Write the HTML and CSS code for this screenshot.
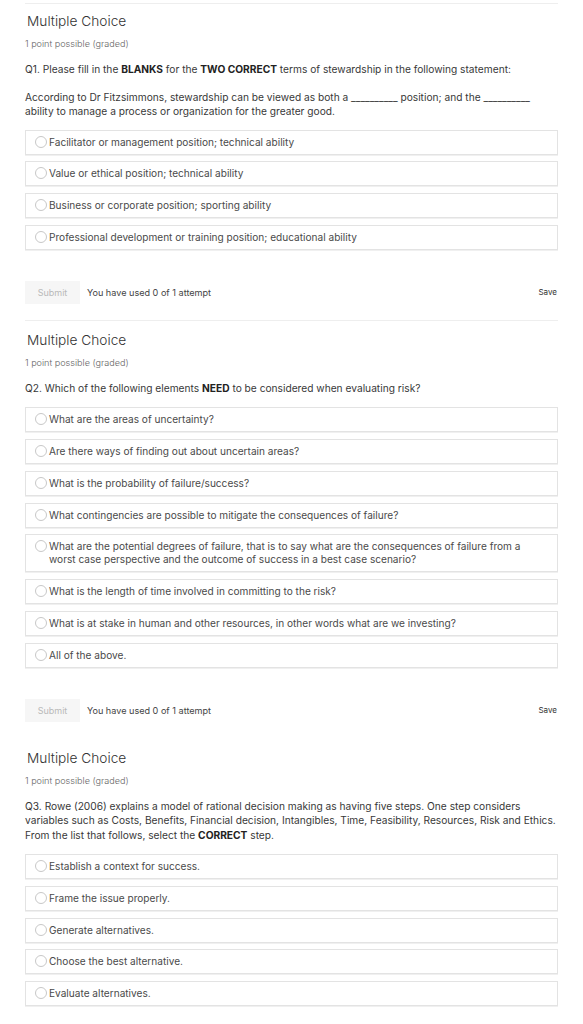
FILE: index.html
```html
<!DOCTYPE html>
<html lang="en">
<head>
<meta charset="utf-8">
<title>Multiple Choice</title>
<link rel="stylesheet" href="styles.css">
</head>
<body>
<main class="course">
  <section class="problem">
    <h2 class="problem-title">Multiple Choice</h2>
    <div class="points">1 point possible (graded)</div>
    <p class="question">Q1. Please fill in the <strong>BLANKS</strong> for the <strong>TWO CORRECT</strong> terms of stewardship in the following statement:</p>
    <p class="statement">According to Dr Fitzsimmons, stewardship can be viewed as both a __________ position; and the __________ ability to manage a process or organization for the greater good.</p>
    <div class="choices">
      <label class="choice"><span class="radio"></span><span class="choice-text">Facilitator or management position; technical ability</span></label>
      <label class="choice"><span class="radio"></span><span class="choice-text">Value or ethical position; technical ability</span></label>
      <label class="choice"><span class="radio"></span><span class="choice-text">Business or corporate position; sporting ability</span></label>
      <label class="choice"><span class="radio"></span><span class="choice-text">Professional development or training position; educational ability</span></label>
    </div>
    <div class="actions">
      <span class="submit">Submit</span>
      <span class="attempts">You have used 0 of 1 attempt</span>
      <span class="save">Save</span>
    </div>
  </section>

  <section class="problem">
    <h2 class="problem-title">Multiple Choice</h2>
    <div class="points">1 point possible (graded)</div>
    <p class="question">Q2. Which of the following elements <strong>NEED</strong> to be considered when evaluating risk?</p>
    <div class="choices">
      <label class="choice"><span class="radio"></span><span class="choice-text">What are the areas of uncertainty?</span></label>
      <label class="choice"><span class="radio"></span><span class="choice-text">Are there ways of finding out about uncertain areas?</span></label>
      <label class="choice"><span class="radio"></span><span class="choice-text">What is the probability of failure/success?</span></label>
      <label class="choice"><span class="radio"></span><span class="choice-text">What contingencies are possible to mitigate the consequences of failure?</span></label>
      <label class="choice"><span class="radio"></span><span class="choice-text">What are the potential degrees of failure, that is to say what are the consequences of failure from a worst case perspective and the outcome of success in a best case scenario?</span></label>
      <label class="choice"><span class="radio"></span><span class="choice-text">What is the length of time involved in committing to the risk?</span></label>
      <label class="choice"><span class="radio"></span><span class="choice-text">What is at stake in human and other resources, in other words what are we investing?</span></label>
      <label class="choice"><span class="radio"></span><span class="choice-text">All of the above.</span></label>
    </div>
    <div class="actions">
      <span class="submit">Submit</span>
      <span class="attempts">You have used 0 of 1 attempt</span>
      <span class="save">Save</span>
    </div>
  </section>

  <section class="problem problem-plain">
    <h2 class="problem-title">Multiple Choice</h2>
    <div class="points">1 point possible (graded)</div>
    <p class="question">Q3. Rowe (2006) explains a model of rational decision making as having five steps. One step considers variables such as Costs, Benefits, Financial decision, Intangibles, Time, Feasibility, Resources, Risk and Ethics. From the list that follows, select the <strong>CORRECT</strong> step.</p>
    <div class="choices">
      <label class="choice"><span class="radio"></span><span class="choice-text">Establish a context for success.</span></label>
      <label class="choice"><span class="radio"></span><span class="choice-text">Frame the issue properly.</span></label>
      <label class="choice"><span class="radio"></span><span class="choice-text">Generate alternatives.</span></label>
      <label class="choice"><span class="radio"></span><span class="choice-text">Choose the best alternative.</span></label>
      <label class="choice"><span class="radio"></span><span class="choice-text">Evaluate alternatives.</span></label>
    </div>
  </section>
</main>
</body>
</html>
```
FILE: styles.css
```css
html, body {
  margin: 0;
  padding: 0;
  background: #ffffff;
}

body {
  font-family: Inter, "Noto Sans", "Liberation Sans", sans-serif;
  color: #333333;
}

.course {
  padding: 3px 25px 0 25px;
}

.problem {
  border-top: 1px solid #eeeeee;
  padding-top: 9px;
  padding-bottom: 16px;
}

.problem + .problem {
  padding-top: 11px;
}

.problem-plain {
  border-top-color: transparent;
}

.problem-title {
  margin: 0;
  font-size: 13.7px;
  line-height: 17px;
  font-weight: 300;
  color: #333333;
  padding-left: 2px;
}

.points {
  margin-top: 8px;
  font-size: 9.1px;
  line-height: 12px;
  font-weight: 300;
  color: #666666;
}

.question {
  margin: 12px 0 0 0;
  font-size: 10.2px;
  line-height: 14.5px;
  color: #383838;
}

.question strong {
  font-weight: 700;
  color: #222222;
}

.statement {
  margin: 13px 0 0 0;
  font-size: 10.2px;
  line-height: 14px;
  color: #383838;
}

.choices {
  margin-top: 12px;
  display: flex;
  flex-direction: column;
  gap: 6.75px;
}

.choice {
  display: flex;
  align-items: flex-start;
  border: 1px solid #e3e3e3;
  box-shadow: 0 1px 0 #f0f0f0;
  padding: 5px 8px 5px 9px;
  font-size: 10.1px;
  line-height: 13px;
  color: #4a4a4a;
}

.radio {
  flex: none;
  width: 12px;
  height: 12px;
  border: 1px solid #c8c8c8;
  border-radius: 50%;
  margin-top: 0px;
  margin-right: 2px;
  box-sizing: border-box;
}

.choice-text {
  flex: 1;
}

.actions {
  margin-top: 31px;
  display: flex;
  align-items: center;
}

.submit {
  width: 55px;
  height: 23px;
  background: #f6f6f6;
  color: #b9b9b9;
  font-size: 9px;
  display: flex;
  align-items: center;
  justify-content: center;
}

.attempts {
  margin-left: 7px;
  font-size: 9.1px;
  color: #444444;
}

.save {
  margin-left: auto;
  font-size: 8px;
  color: #333333;
  padding-right: 1px;
}
```
